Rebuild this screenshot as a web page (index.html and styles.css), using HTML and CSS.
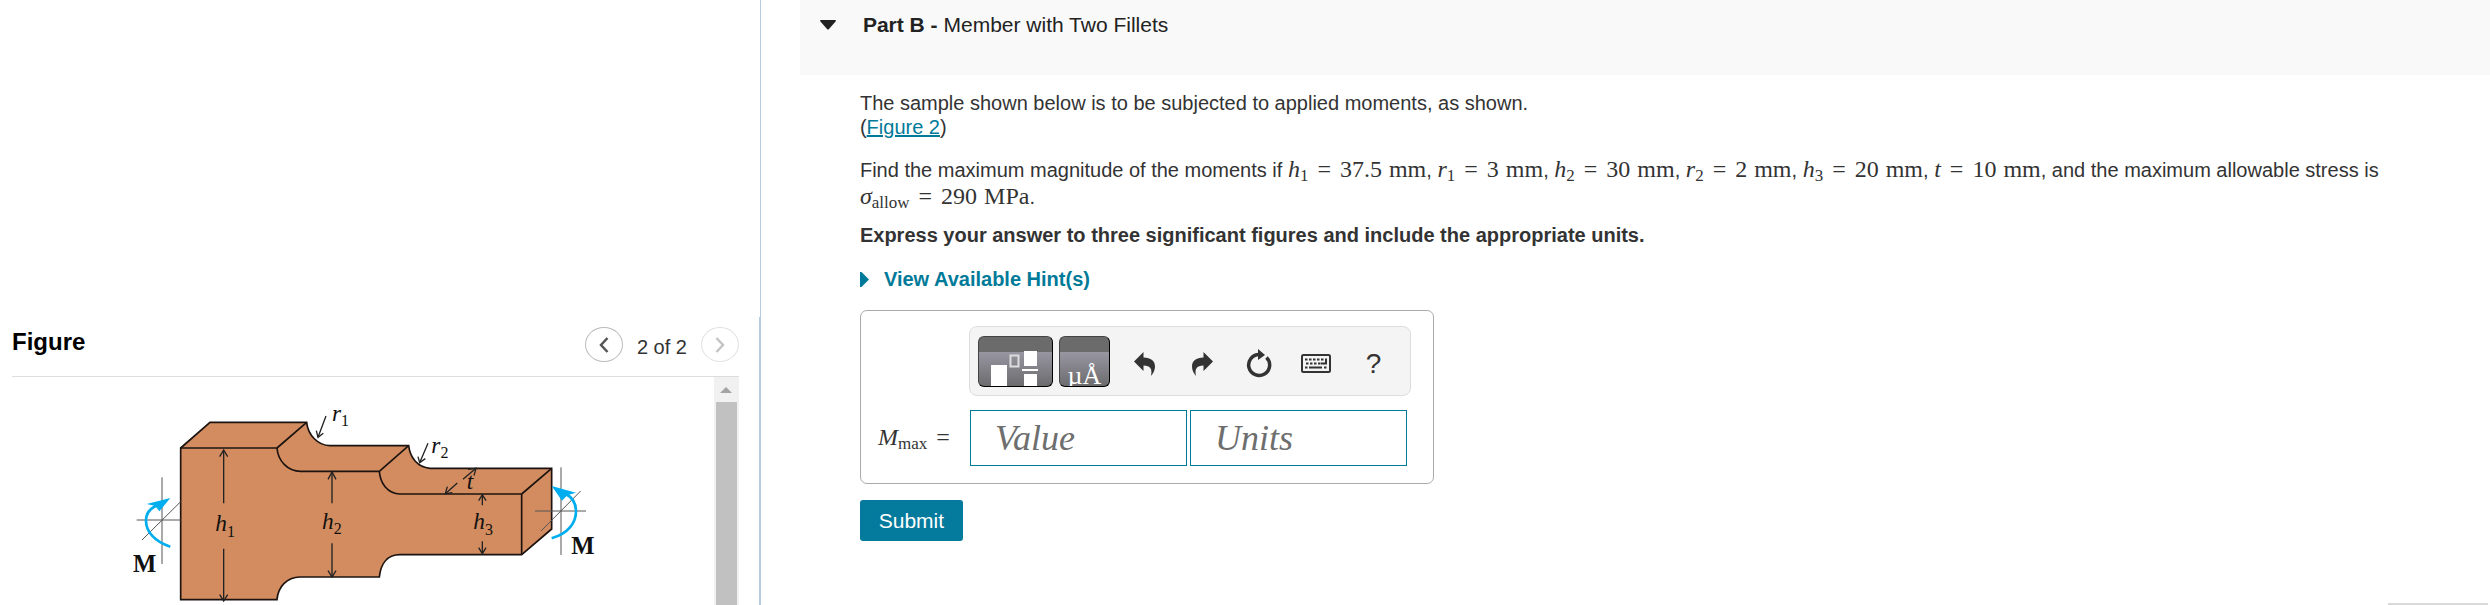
FILE: index.html
```html
<!DOCTYPE html>
<html lang="en">
<head>
  <meta charset="UTF-8" />
  <title>Part B - Member with Two Fillets</title>
  <link rel="stylesheet" href="styles.css">
</head>
<body>

  <aside class="side">
    <div class="side-top"></div>
    <section class="figure-panel">
      <div class="figure-head">
        <h2>Figure</h2>
        <div class="pager">
          <button class="round" aria-label="Previous figure">
            <svg width="10" height="18" viewBox="0 0 10 18"><path d="M8.500 2L2 9l6.500 7" /></svg>
          </button>
          <span class="count">2 of 2</span>
          <button class="round next" aria-label="Next figure" disabled>
            <svg width="10" height="18" viewBox="0 0 10 18"><path d="M1.500 2L8 9l-6.500 7" /></svg>
          </button>
        </div>
      </div>
      <div class="figure-body">
        <svg class="drawing" viewBox="360 201 1500 684">
          <!-- body of the member -->
          <path class="solid" d="M542 414L630 337H920C924 374 952 406 990 407H1226C1230 442 1252 472 1290 475H1655V657L1565 734H1200C1160 734 1142 764 1138 801H900C860 802 834 830 831 869H542Z" />
          <path class="edge" d="M542 414H831C834 452 862 484 902 484H1138C1141 520 1162 551 1200 552H1565V734M831 414L920 337M1138 484L1226 407M1565 552L1655 475" />
          <!-- axes of the moments -->
          <path class="axis" d="M486 502V762M410 630H542M426 690L542 575M1683 472V735M1605 603H1758M1623 663L1742 543" />
          <!-- dimensions -->
          <path class="dim" d="M671 422V580M671 716V872M996 488V580M996 700V799M1447 556V586M1447 694V728M1389 508L1428 475M1372 519L1336 551M978 318L954 382M1284 400L1259 458" />
          <path class="dim" d="M659 440L671 420L683 440M659 854L671 873L683 854M984 508L996 486L1008 508M984 782L996 801L1008 782M1436 572L1447 554L1458 572M1436 713L1447 731L1458 713M1404 478L1428 475L1422 497M1342 530L1336 551L1357 548M949 362L954 382L970 370M1254 440L1259 458L1276 446" />
          <!-- moment arrows -->
          <path class="moment" d="M511 710C466 696 438 666 438 632C438 608 452 592 478 584" />
          <path class="head" d="M511 564L440 582L466 588L478 604Z" />
          <path class="moment" d="M1655 685C1706 670 1728 638 1728 604C1728 580 1716 562 1698 552" />
          <path class="head" d="M1655 528L1728 548L1702 556L1686 572Z" />
          <text class="it" x="646" y="664">h<tspan class="sub" dy="18">1</tspan></text>
          <text class="it" x="966" y="658">h<tspan class="sub" dy="14">2</tspan></text>
          <text class="it" x="1420" y="658">h<tspan class="sub" dy="18">3</tspan></text>
          <text class="it" x="996" y="332">r<tspan class="sub" dy="15">1</tspan></text>
          <text class="it" x="1294" y="428">r<tspan class="sub" dy="15">2</tspan></text>
          <text class="it" x="1400" y="538">t</text>
          <text class="bold" x="399" y="785">M</text>
          <text class="bold" x="1714" y="731">M</text>
        </svg>
        <div class="scrollbar">
          <div class="scroll-up"></div>
          <div class="thumb"></div>
        </div>
      </div>
    </section>
  </aside>

  <main class="main">
    <header class="part-head">
      <svg width="16" height="10" viewBox="0 0 16 10"><path d="M0 1Q0 0 1 0H15Q16 0 16 1L9 9Q8 10 7 9Z" fill="#222" /></svg>
      <h1><b>Part B -</b> Member with Two Fillets</h1>
    </header>

    <div class="content">
      <p>The sample shown below is to be subjected to applied moments, as shown.<br>(<a href="#">Figure 2</a>)</p>
      <p class="given">Find the maximum magnitude of the moments if
        <span class="math"><var>h</var><sub>1</sub><i class="eq">=</i>37.5<i class="unit">mm</i></span>,
        <span class="math"><var>r</var><sub>1</sub><i class="eq">=</i>3<i class="unit">mm</i></span>,
        <span class="math"><var>h</var><sub>2</sub><i class="eq">=</i>30<i class="unit">mm</i></span>,
        <span class="math"><var>r</var><sub>2</sub><i class="eq">=</i>2<i class="unit">mm</i></span>,
        <span class="math"><var>h</var><sub>3</sub><i class="eq">=</i>20<i class="unit">mm</i></span>,
        <span class="math"><var>t</var><i class="eq">=</i>10<i class="unit">mm</i></span>, and the maximum allowable stress is
        <span class="math"><var>σ</var><sub>allow</sub><i class="eq">=</i>290<i class="unit">MPa</i></span>.</p>
      <p><b>Express your answer to three significant figures and include the appropriate units.</b></p>
      <button class="hints">
        <svg width="9" height="15" viewBox="0 0 9 15"><path d="M0 0h1.500L9 7.500L1.500 15H0Z" fill="#007a99" /></svg>
        View Available Hint(s)
      </button>

      <form class="answer">
        <div class="toolbar">
          <button type="button" class="tool template" aria-label="Templates">
            <svg width="73" height="49" viewBox="0 0 73 49">
              <path d="M12 28h16v21H12ZM45 14h13v15H45ZM43 32h16v2H43ZM45 37h13v12H45Z" fill="#fff" />
              <path d="M31.500 18.500h8v11h-8Z" fill="none" stroke="#ddd" stroke-width="2" />
            </svg>
          </button>
          <button type="button" class="tool symbols" aria-label="Symbols">µÅ</button>
          <button type="button" class="icon" aria-label="Undo">
            <svg width="22" height="24" viewBox="0 0 22 24"><path d="M0 9.500L9.500 0v5.500C17 5.500 21 9 21 14.500C21 18 19.500 21 17 24C18.500 17 16.500 13.500 9.500 13.500V19Z" /></svg>
          </button>
          <button type="button" class="icon" aria-label="Redo">
            <svg width="22" height="24" viewBox="0 0 22 24"><path d="M22 9.500L12.500 0v5.500C5 5.500 1 9 1 14.500C1 18 2.500 21 5 24C3.500 17 5.500 13.500 12.500 13.500V19Z" /></svg>
          </button>
          <button type="button" class="icon" aria-label="Reset">
            <svg width="26" height="29" viewBox="0 0 26 29"><path d="M20.500 8.500A10.500 10.500 0 1 1 13 5.500" fill="none" stroke="#333" stroke-width="3.500" /><path d="M12 0L19 6L12 11Z" /></svg>
          </button>
          <button type="button" class="icon" aria-label="Keyboard">
            <svg width="30" height="19" viewBox="0 0 30 19"><rect x="1" y="1" width="28" height="17" rx="1.500" fill="none" stroke="#333" stroke-width="2" /><path d="M4 5.500H23M5 9.500H21M4 13.500H7M23 13.500H26" fill="none" stroke="#333" stroke-width="2" stroke-dasharray="2.500 1.500" /><path d="M8 13.500H21M20 9.500H25V4.500" fill="none" stroke="#333" stroke-width="2" /></svg>
          </button>
          <button type="button" class="icon help" aria-label="Help">?</button>
        </div>
        <label for="value" class="math"><var>M</var><sub>max</sub><i class="eq">=</i></label>
        <div class="fields">
          <input id="value" type="text" placeholder="Value">
          <input type="text" placeholder="Units" aria-label="Units">
        </div>
      </form>
      <button class="submit">Submit</button>
    </div>
  </main>

  <div class="dock"></div>

</body>
</html>
```

FILE: styles.css
```css
* {
  box-sizing: border-box;
}
body {
  margin: 0;
  display: flex;
  min-height: 100vh;
  overflow: hidden;
  font-family: "Liberation Sans", Arial, sans-serif;
  font-size: 20px;
  line-height: 24px;
  color: #333;
  background: #fff;
}
button {
  font: inherit;
  padding: 0;
  border: none;
  background: none;
  cursor: pointer;
}

/* left column */
.side {
  width: 30.56%;
  display: flex;
  flex-direction: column;
}
.side-top {
  flex: 1;
  border-right: 1px solid #b9cde0;
}
.figure-panel {
  height: 288px;
  padding: 0 20px 0 12px;
  border-right: 2px solid #b9cde0;
  display: flex;
  flex-direction: column;
}
.figure-head {
  display: flex;
  justify-content: space-between;
  height: 60px;
  padding-top: 10px;
  border-bottom: 1px solid #ddd;
}
.figure-head h2 {
  margin: 0;
  font-size: 24px;
  line-height: 30px;
  color: #000;
}
.pager {
  display: flex;
  align-items: flex-start;
}
.round {
  width: 38px;
  height: 35px;
  border: 1px solid #bbb;
  border-radius: 50%;
  display: flex;
  align-items: center;
  justify-content: center;
}
.round path {
  fill: none;
  stroke: #555;
  stroke-width: 2.5;
}
.round.next {
  border-color: #e2e2e2;
}
.round.next path {
  stroke: #c4c4c4;
}
.count {
  width: 78px;
  text-align: center;
  line-height: 40px;
}
.figure-body {
  flex: 1;
  display: flex;
  justify-content: space-between;
  overflow: hidden;
}
.drawing {
  width: 500px;
  height: 228px;
  margin-left: 108px;
}
.solid {
  fill: #d28c5f;
  stroke: #1c1310;
  stroke-width: 5;
}
.edge {
  fill: none;
  stroke: #1c1310;
  stroke-width: 5;
}
.axis {
  fill: none;
  stroke: #555;
  stroke-width: 3;
}
.dim {
  fill: none;
  stroke: #222;
  stroke-width: 4;
}
.moment {
  fill: none;
  stroke: #00aeef;
  stroke-width: 8;
}
.head {
  fill: #00aeef;
}
.drawing text {
  font-family: "Liberation Serif", "Times New Roman", serif;
  font-size: 70px;
  fill: #111;
}
.drawing .it {
  font-style: italic;
}
.drawing .sub {
  font-style: normal;
  font-size: 48px;
}
.drawing .bold {
  font-size: 74px;
  font-weight: bold;
}
.scrollbar {
  width: 25px;
  padding: 0 2px;
  background: #f1f1f1;
  display: flex;
  flex-direction: column;
}
.scroll-up {
  height: 25px;
  display: flex;
  align-items: center;
  justify-content: center;
}
.scroll-up::before {
  content: "";
  border: 6px solid transparent;
  border-top: none;
  border-bottom-color: #a3a3a3;
}
.thumb {
  flex: 1;
  background: #c1c1c1;
}

/* question */
.main {
  flex: 1;
  padding-left: 39px;
}
.part-head {
  height: 75px;
  padding: 13px 20px;
  display: flex;
  gap: 27px;
  background: #f9f9f9;
}
.part-head svg {
  margin-top: 7px;
}
.part-head h1 {
  margin: 0;
  font-size: 21px;
  font-weight: normal;
  color: #222;
}
.content {
  padding: 16px 60px;
}
.content p {
  margin: 0 0 18px;
}
.content .given {
  margin-bottom: 12px;
}
.content a {
  color: #007a99;
}
.math {
  font-family: "Liberation Serif", "Times New Roman", serif;
  font-size: 24px;
  line-height: 24px;
  white-space: nowrap;
}
.math i {
  font-style: normal;
}
.math sub {
  font-size: 17px;
  line-height: 1;
  vertical-align: -4px;
}
.math .eq {
  margin: 0 9px;
}
.math .unit {
  margin-left: 7px;
}
.hints {
  display: flex;
  align-items: center;
  gap: 15px;
  margin: 20px 0 19px;
  font-weight: bold;
  color: #007a99;
}
.answer {
  width: 574px;
  padding: 15px 22px 17px 17px;
  border: 1px solid #aaa;
  border-radius: 7px;
  display: grid;
  grid-template-columns: auto 442px;
  row-gap: 14px;
}
.toolbar {
  grid-column: 2;
  height: 70px;
  padding: 0 8px;
  border: 1px solid #ddd;
  border-radius: 8px;
  background: #f4f4f4;
  display: flex;
  align-items: center;
}
.tool {
  height: 51px;
  border: 1px solid #444;
  border-right-color: #000;
  border-bottom-color: #000;
  border-radius: 6px;
  background: linear-gradient(#6b6b6b 15px, #9896a1 15px, #6c6c6e);
  overflow: hidden;
}
.tool svg {
  display: block;
}
.template {
  width: 75px;
  margin-right: 6px;
}
.symbols {
  width: 51px;
  margin-right: 7px;
  padding-top: 24px;
  font-family: "Liberation Serif", "Times New Roman", serif;
  font-size: 26px;
  line-height: 30px;
  color: #fff;
}
.icon {
  width: 57px;
  padding-top: 5px;
  display: flex;
  align-items: center;
  justify-content: center;
  fill: #333;
  color: #333;
}
.help {
  font-size: 28px;
}
.answer label {
  align-self: center;
}
.fields {
  display: flex;
  gap: 3px;
  padding: 0 4px 0 1px;
}
.fields input {
  flex: 1;
  min-width: 0;
  height: 56px;
  padding: 0 24px;
  border: 1px solid #007a99;
  font-family: "Liberation Serif", "Times New Roman", serif;
  font-size: 36px;
  font-style: italic;
}
.fields input::placeholder {
  color: #6e6e6e;
}
.submit {
  width: 103px;
  height: 41px;
  margin-top: 16px;
  border-radius: 3px;
  background: #047a9c;
  font-size: 21px;
  color: #fff;
}

/* top edge of the docked bar */
.dock {
  position: fixed;
  right: 2px;
  bottom: 0;
  width: 100px;
  height: 2px;
  background: #d9d9d9;
}
```
